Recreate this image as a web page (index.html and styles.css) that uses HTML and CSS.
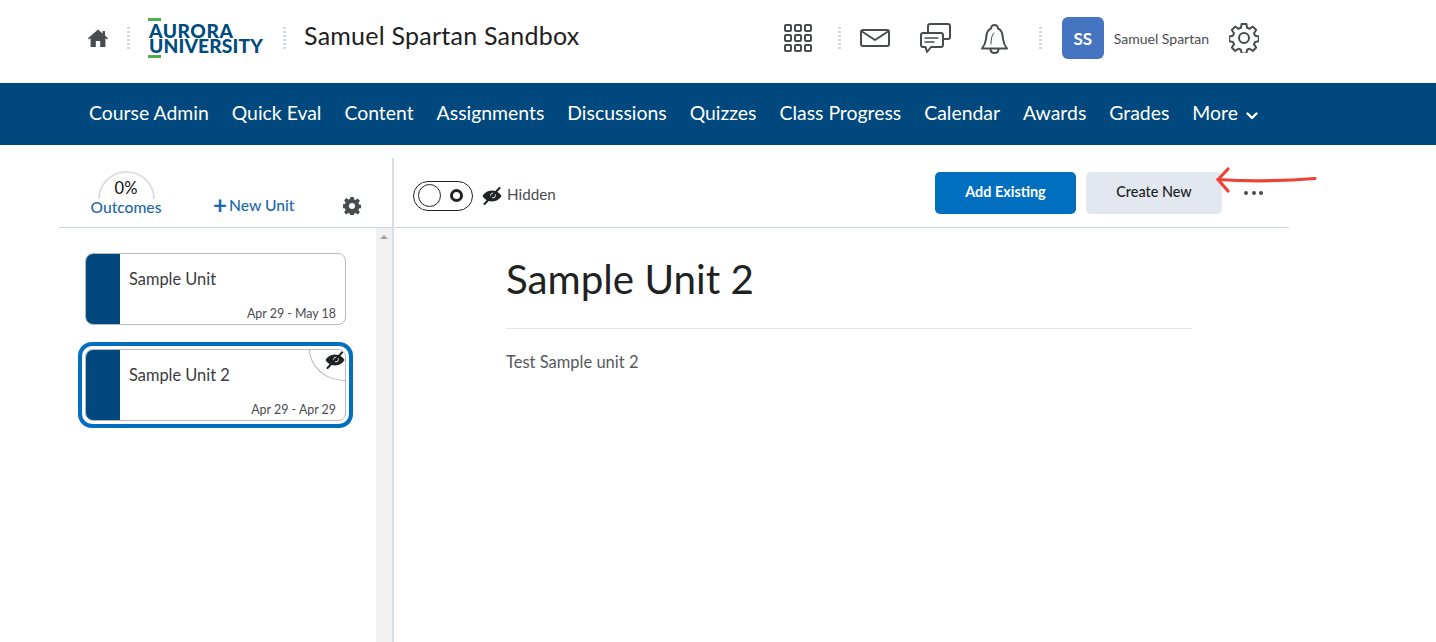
FILE: index.html
```html
<!DOCTYPE html>
<html lang="en">
<head>
<meta charset="utf-8">
<title>Samuel Spartan Sandbox</title>
<link rel="stylesheet" href="styles.css">
</head>
<body>
<header class="top">
  <div class="top-left">
    <svg class="home" viewBox="0 0 20 18" width="20" height="18"><path fill="#494c4e" d="M10 .5 0 9.3l1 1.2 1.6-1.3V18h5.2v-6h4.4v6h5.2V9.2l1.6 1.3 1-1.2-3-2.7V2h-2.4v2.4z"/></svg>
    <span class="dots d1"></span>
    <div class="logo">
      <span class="logo-bar"></span>
      <span class="logo-a">AURORA</span>
      <span class="logo-u">UNIVERSITY</span>
      <span class="logo-bar bottom"></span>
    </div>
    <span class="dots d2"></span>
    <span class="course">Samuel Spartan Sandbox</span>
  </div>
  <div class="top-right">
    <svg class="ic-grid" viewBox="0 0 28 28" width="28" height="28" fill="none" stroke="#494c4e" stroke-width="2"><rect x="1" y="1" width="6" height="6" rx="1"/><rect x="11" y="1" width="6" height="6" rx="1"/><rect x="21" y="1" width="6" height="6" rx="1"/><rect x="1" y="11" width="6" height="6" rx="1"/><rect x="11" y="11" width="6" height="6" rx="1"/><rect x="21" y="11" width="6" height="6" rx="1"/><rect x="1" y="21" width="6" height="6" rx="1"/><rect x="11" y="21" width="6" height="6" rx="1"/><rect x="21" y="21" width="6" height="6" rx="1"/></svg>
    <span class="dots d3"></span>
    <svg class="ic-mail" viewBox="0 0 30 18" width="30" height="18" fill="none" stroke="#494c4e" stroke-width="2" stroke-linejoin="round"><rect x="1" y="1" width="28" height="16" rx="2"/><path d="M2 2.500 15 11 28 2.500"/></svg>
    <svg class="ic-chat" viewBox="0 0 31 31" width="31" height="31" fill="none" stroke="#494c4e" stroke-width="2" stroke-linejoin="round" stroke-linecap="round"><path d="M8 9V3a2 2 0 0 1 2-2h18a2 2 0 0 1 2 2v11a2 2 0 0 1-2 2h-5"/><path d="M3 10h18a2 2 0 0 1 2 2v10a2 2 0 0 1-2 2H11l-4 5-1.500-5H3a2 2 0 0 1-2-2V12a2 2 0 0 1 2-2z"/><path d="M5 15h13M5 19h9" stroke-width="1.300"/></svg>
    <svg class="ic-bell" viewBox="0 0 27 30" width="27" height="30" fill="none" stroke="#494c4e" stroke-width="2" stroke-linejoin="round" stroke-linecap="round"><path d="M13.500 1a3.500 3.500 0 0 0-3.500 3.500C6 6 5.500 10 5 15c-.4 4-2 7-4 9.500h25c-2-2.500-3.600-5.500-4-9.500-.5-5-1-9-5-10.500A3.500 3.500 0 0 0 13.500 1z"/><path d="M9.500 25c0 2.500 1.800 4 4 4s4-1.500 4-4"/><path d="M10 20c0-4 .5-9 3-11" stroke-width="1"/></svg>
    <span class="dots d4"></span>
    <span class="avatar">SS</span>
    <span class="user">Samuel Spartan</span>
    <svg class="ic-gear" viewBox="0 0 30 30" width="30" height="30" fill="none" stroke="#494c4e" stroke-width="2" stroke-linejoin="round"><path d="M12.600 1h4.800l.7 3.800 2.500 1 3.200-2.200 3.400 3.400-2.200 3.200 1 2.500 3.800.7v4.800l-3.800.7-1 2.500 2.200 3.200-3.400 3.400-3.200-2.200-2.500 1-.7 3.800h-4.800l-.7-3.800-2.500-1-3.200 2.200-3.400-3.400 2.200-3.200-1-2.500-3.800-.7v-4.800l3.800-.7 1-2.500-2.200-3.200L6.200 3.600l3.200 2.200 2.500-1z"/><circle cx="15" cy="15" r="5"/></svg>
  </div>
</header>

<nav class="nav">
  <a>Course Admin</a><a>Quick Eval</a><a>Content</a><a>Assignments</a><a>Discussions</a><a>Quizzes</a><a>Class Progress</a><a>Calendar</a><a>Awards</a><a>Grades</a>
  <a class="more">More <svg viewBox="0 0 12 8" width="12" height="8" fill="none" stroke="#fff" stroke-width="2.400" stroke-linecap="round" stroke-linejoin="round"><path d="M1.500 1.500 6 6l4.500-4.500"/></svg></a>
</nav>

<div class="layout">
  <aside class="side">
    <div class="side-head">
      <div class="outcomes">
        <span class="gauge"><span class="pct">0%</span></span>
        <span class="out-label">Outcomes</span>
      </div>
      <a class="new-unit"><span class="plus">+</span>New Unit</a>
      <svg class="side-gear" viewBox="0 0 18 18" width="18" height="18"><path fill="#494c4e" fill-rule="evenodd" d="M7.300 0h3.400l.4 2.500 1.500.6 2.100-1.500 2.200 2.200-1.500 2.100.6 1.500 2.500.4v3.400l-2.500.4-.6 1.500 1.500 2.100-2.200 2.200-2.100-1.500-1.500.6-.4 2.500H7.300l-.4-2.500-1.500-.6-2.100 1.500-2.200-2.200 1.500-2.100-.6-1.500-2.500-.4V7.300l2.500-.4.6-1.500-1.500-2.100 2.200-2.200 2.100 1.500 1.500-.6zM9 6a3 3 0 1 0 0 6 3 3 0 0 0 0-6z"/></svg>
    </div>
    <div class="side-body">
      <div class="units">
        <div class="unit">
          <span class="swatch"></span>
          <div class="unit-text">
            <span class="unit-name">Sample Unit</span>
            <span class="unit-date">Apr 29 - May 18</span>
          </div>
        </div>
        <div class="unit-focus">
          <div class="unit short">
            <span class="swatch"></span>
            <div class="unit-text">
              <span class="unit-name">Sample Unit 2</span>
              <span class="unit-date">Apr 29 - Apr 29</span>
            </div>
            <span class="notch">
              <svg viewBox="0 0 20 18" width="20" height="18"><use href="#eye-off"/></svg>
            </span>
          </div>
        </div>
      </div>
      <div class="scroll"><span class="scroll-up"></span></div>
    </div>
  </aside>

  <main class="main">
    <div class="toolbar">
      <div class="toggle"><span class="knob"></span><span class="ring"></span></div>
      <svg class="eye" viewBox="0 0 20 18" width="20" height="18"><use href="#eye-off"/></svg>
      <span class="hidden-label">Hidden</span>
      <div class="actions">
        <button class="btn primary">Add Existing</button>
        <button class="btn second">Create New</button>
        <span class="ellipsis"><i></i><i></i><i></i></span>
      </div>
    </div>
    <article class="content">
      <h1>Sample Unit 2</h1>
      <p>Test Sample unit 2</p>
    </article>
    <svg class="arrow" viewBox="0 0 104 26" width="104" height="26" fill="none" stroke="#ef4136" stroke-width="3.200" stroke-linecap="round" stroke-linejoin="round"><path d="M4 12.500c30 2 65 1.500 97-1"/><path d="M14 2 4 12.500 14 24"/></svg>
  </main>
</div>

<svg class="defs" width="0" height="0"><defs><g id="eye-off"><path fill="#202122" d="M10 3.500c4.500 0 8 2.800 9.500 5.500-1.500 2.700-5 5.500-9.500 5.500S2 11.700.5 9C2 6.300 5.500 3.500 10 3.500z"/><circle cx="11" cy="8.500" r="2.400" fill="none" stroke="#fff" stroke-width=".9"/><path d="M2.500 17 17.500 1" stroke="#202122" stroke-width="2" stroke-linecap="round"/></g></defs></svg>
</body>
</html>
```

FILE: styles.css
```css
* { box-sizing: border-box; }
html, body { margin: 0; height: 642px; overflow: hidden; background: #fff; }
body { font-family: Lato, "Open Sans", sans-serif; color: #202122; }
.defs { position: absolute; }

.top { height: 83px; display: flex; align-items: center; justify-content: space-between; padding: 0 177px 0 88px; }
.top-left, .top-right { display: flex; align-items: center; }
.top-left { margin-top: -7px; }
.top-right { margin-top: -7px; }
.home { display: block; }
.dots { width: 3px; height: 24px; background-image: radial-gradient(circle, #cfd6dc 1.100px, transparent 1.300px); background-size: 3px 4px; }
.d1 { margin: 0 18px 0 19px; }
.logo { display: flex; flex-direction: column; color: #004b80; font-weight: 900; line-height: 15px; width: 114px; }
.logo-bar { width: 13px; height: 3px; background: #4cae4f; }
.logo-bar.bottom { margin-top: 2px; }
.logo-a { font-size: 19.200px; letter-spacing: .55px; margin-top: 2px; padding-left: 1px; }
.logo-u { font-size: 19.200px; letter-spacing: .15px; padding-left: 1px; }
.d2 { margin: 0 18px 0 21px; }
.course { font-size: 25px; letter-spacing: .24px; color: #202122; margin-top: -6px; }
.ic-grid { margin-right: 26px; }
.d3 { margin-right: 19px; }
.ic-mail { margin-right: 30px; }
.ic-chat { margin-right: 30px; margin-top: 1px; }
.ic-bell { margin-right: 31px; margin-top: 1px; }
.d4 { margin-right: 20px; }
.avatar { width: 42px; height: 42px; border-radius: 6px; background: #4575c0; color: #fff; font-weight: 700; font-size: 17px; display: flex; align-items: center; justify-content: center; margin-right: 10px; }
.user { font-size: 14px; color: #494c4e; margin-right: 20px; }

.nav { height: 62px; background: #00487d; display: flex; align-items: center; gap: 23px; padding: 0 0 4px 89px; }
.nav a { color: #fff; font-size: 19.400px; }
.more svg { margin-left: 3px; }

.layout { display: flex; height: 497px; margin: 13px 147px 0 59px; }
.side { width: 335px; flex: none; border-right: 2px solid #d7dfe8; display: flex; flex-direction: column; }
.side-head { height: 70px; border-bottom: 1px solid #cdd5dc; position: relative; flex: none; }
.outcomes { position: absolute; left: 31px; top: 13px; width: 72px; display: flex; flex-direction: column; align-items: center; }
.gauge { width: 57px; height: 28px; border: 2px solid #dcdfe3; border-bottom: 0; border-radius: 29px 29px 0 0; display: flex; justify-content: center; padding-top: 5px; }
.pct { font-size: 16.500px; line-height: 20px; color: #111; }
.out-label { color: #2168ab; font-size: 15.600px; line-height: 18px; font-weight: 500; margin-top: -1px; white-space: nowrap; }
.new-unit { position: absolute; left: 154px; top: 37px; color: #1b68ad; font-size: 15.700px; font-weight: 500; line-height: 20px; display: flex; align-items: center; }
.plus { font-size: 24px; line-height: 20px; font-weight: 700; margin-right: 2px; }
.side-gear { position: absolute; left: 284px; top: 39px; }
.side-body { flex: 1; display: flex; justify-content: space-between; }
.units { padding: 25px 0 0 19px; display: flex; flex-direction: column; gap: 17px; }
.unit { width: 261px; height: 72px; margin-left: 7px; border: 1px solid #b5bac0; border-radius: 8px; display: flex; position: relative; overflow: hidden; }
.swatch { width: 34px; background: #00487d; flex: none; }
.unit-text { flex: 1; display: flex; flex-direction: column; justify-content: space-between; padding: 15px 9px 2px 9px; }
.unit-name { font-size: 16.400px; line-height: 20px; color: #3a3c3e; }
.unit-date { font-size: 12.400px; line-height: 16px; color: #494c4e; text-align: right; }
.unit-focus { width: 275px; height: 86px; border: 4px solid #006fbf; border-radius: 14px; padding: 3px 0 0 3px; }
.unit-focus .unit { margin-left: 0; width: 261px; height: 72px; }
.notch { position: absolute; right: -1px; top: -1px; width: 37px; height: 32px; background: #fff; border-left: 1px solid #b5bac0; border-bottom: 1px solid #b5bac0; border-bottom-left-radius: 36px 32px; display: flex; justify-content: flex-end; padding: 2px 1px 0 0; }
.notch svg { display: block; }
.scroll { width: 16px; background: #f1f1f1; flex: none; position: relative; }
.scroll-up { position: absolute; left: 4px; top: 7px; border: 4px solid transparent; border-top: 0; border-bottom: 4px solid #a3a3a3; }

.main { flex: 1; position: relative; }
.toolbar { height: 70px; border-bottom: 1px solid #cdd5dc; display: flex; align-items: center; padding: 0 0 0 19px; }
.toggle { width: 60px; height: 30px; border: 1px solid #202122; border-radius: 15px; margin-top: 6px; display: flex; align-items: center; justify-content: space-between; padding: 0 9px 0 4px; }
.knob { width: 23px; height: 23px; border-radius: 50%; border: 1px solid #202122; }
.ring { width: 13px; height: 13px; border-radius: 50%; border: 3px solid #202122; }
.eye { margin: 6px 5px 0 9px; }
.hidden-label { font-size: 15.200px; color: #494c4e; margin-top: 3px; }
.actions { margin-left: auto; display: flex; align-items: center; margin-right: 25px; margin-top: 1px; }
.btn { height: 42px; border: 0; border-radius: 5px; font-family: inherit; font-size: 14.400px; padding: 0 0 3px; }
.btn.primary { width: 141px; background: #006fbf; color: #fff; font-weight: 700; margin-right: 10px; }
.btn.second { width: 136px; background: #e3e8f0; color: #202122; font-weight: 500; margin-right: 22px; }
.ellipsis { display: flex; gap: 3.500px; width: 20px; }
.ellipsis i { width: 4px; height: 4px; border-radius: 50%; background: #494c4e; display: block; }
.content { width: 686px; margin-left: 112px; }
.content h1 { margin: 0; padding: 26px 0 24px; font-size: 40.300px; line-height: 50px; font-weight: 400; border-bottom: 1px solid #e3e5e7; color: #202122; }
.content p { margin: 23px 0 0; font-size: 16.500px; line-height: 20px; color: #565a5c; }
.arrow { position: absolute; left: 820px; top: 9px; }
```
